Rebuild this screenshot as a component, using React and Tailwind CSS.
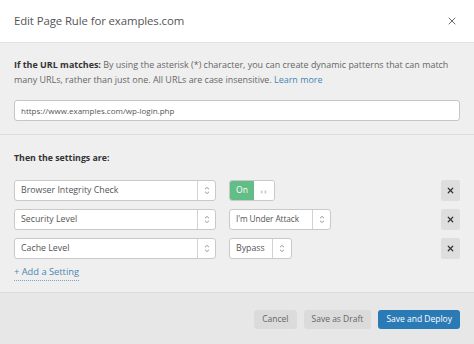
import { X } from 'lucide-react';

// Small up/down chevrons used by the select boxes
const UpDown = () => (
  <svg width="6" height="9" viewBox="0 0 6 9" fill="none" stroke="#9a9a9a" strokeWidth="1">
    <path d="M1 3.2 3 1.4 5 3.2" />
    <path d="M1 5.8 3 7.6 5 5.8" />
  </svg>
);

const Select = ({ label, width, arrowWidth, textClass = 'text-[9px]' }) => (
  <div className={`flex h-[21px] bg-white border border-[#c9c9c9] rounded-[3px] ${width}`}>
    <div className={`flex-1 flex items-center pl-[6px] text-[#555] whitespace-nowrap overflow-hidden ${textClass}`}>{label}</div>
    <div className={`flex items-center justify-center border-l border-[#d2d2d2] ${arrowWidth}`}>
      <UpDown />
    </div>
  </div>
);

const RemoveButton = () => (
  <button className="ml-auto w-[19px] h-[21px] rounded-[2px] bg-[#dedede] flex items-center justify-center">
    <X size={9} strokeWidth={3.2} color="#333" />
  </button>
);

export default function App() {
  return (
    <div className="w-[474px] h-[344px] bg-white flex flex-col font-['Open_Sans',sans-serif] overflow-hidden">
      {/* Header */}
      <div className="h-[43px] shrink-0 flex items-center justify-between pl-[14px] pr-[16px] border-b border-[#e2e2e2]">
        <h1 className="text-[11.4px] text-[#555] tracking-[-0.1px]">Edit Page Rule for examples.com</h1>
        <X size={12} strokeWidth={1.6} color="#444" />
      </div>

      {/* URL section */}
      <div className="shrink-0 bg-[#efefef] px-[14px] pt-[14px] pb-[13px] border-b border-[#dcdcdc]">
        <p className="text-[8.95px] leading-[15px] text-[#666] pr-[6px]">
          <span className="font-bold text-[#333]">If the URL matches:</span> By using the asterisk (*) character, you can create dynamic patterns that can match many URLs, rather than just one. All URLs are case insensitive.{' '}
          <span className="text-[#3d86b8]">Learn more</span>
        </p>
        <div className="mt-[13px] h-[21px] bg-white border border-[#c6c6c6] rounded-[3px] flex items-center pl-[6px] text-[8px] text-[#555]">
          https://www.examples.com/wp-login.php
        </div>
      </div>

      {/* Settings section */}
      <div className="shrink-0 bg-[#efefef] px-[14px] pt-[16px] pb-[11px] border-b border-[#dcdcdc]">
        <h2 className="text-[8.8px] leading-[15px] font-bold text-[#333]">Then the settings are:</h2>
        <div className="mt-[14px] flex flex-col gap-[8px]">
          <div className="flex items-center">
            <Select label="Browser Integrity Check" width="w-[202px]" arrowWidth="w-[18px]" textClass="text-[8.8px]" />
            <div className="ml-[13px] flex h-[21px] w-[46px] rounded-[3px] border border-[#c9c9c9] overflow-hidden">
              <div className="w-[24px] bg-[#63bd86] text-white text-[8.5px] flex items-center justify-center">On</div>
              <div className="flex-1 bg-white flex items-center justify-center text-[8px] text-[#888] tracking-[1px]">‹›</div>
            </div>
            <RemoveButton />
          </div>
          <div className="flex items-center">
            <Select label="Security Level" width="w-[202px]" arrowWidth="w-[18px]" textClass="text-[8.8px]" />
            <div className="ml-[13px]">
              <Select label="I'm Under Attack" width="w-[102px]" arrowWidth="w-[18px]" textClass="text-[8.3px] tracking-[-0.1px]" />
            </div>
            <RemoveButton />
          </div>
          <div className="flex items-center">
            <Select label="Cache Level" width="w-[202px]" arrowWidth="w-[18px]" textClass="text-[8.8px]" />
            <div className="ml-[13px]">
              <Select label="Bypass" width="w-[63px]" arrowWidth="w-[19px]" textClass="text-[8.8px]" />
            </div>
            <RemoveButton />
          </div>
        </div>
        <div className="mt-[7px] flex">
          <span className="text-[9.3px] leading-[12px] text-[#4a87b3] pb-[2px] border-b border-dotted border-[#7aa6c6]">
            + Add a Setting
          </span>
        </div>
      </div>

      {/* Footer */}
      <div className="flex-1 bg-[#e7e7e7] flex items-start justify-end gap-[7px] pt-[17px] pr-[14px]">
        <button className="h-[19px] px-[8px] rounded-[3px] bg-[#dbdbdb] text-[8.5px] text-[#666]">Cancel</button>
        <button className="h-[19px] px-[8px] rounded-[3px] bg-[#dbdbdb] text-[8.5px] text-[#666]">Save as Draft</button>
        <button className="h-[19px] px-[8px] rounded-[3px] bg-[#2a7ab5] text-[8.5px] text-white">Save and Deploy</button>
      </div>
    </div>
  );
}
